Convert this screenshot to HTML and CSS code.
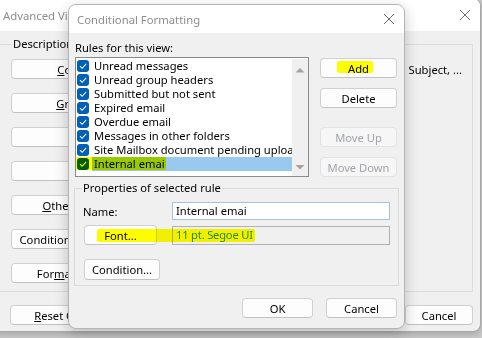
FILE: index.html
```html
<!DOCTYPE html>
<html>
<head>
<meta charset="utf-8">
<link rel="stylesheet" href="styles.css">
</head>
<body>
<div class="bgwin">
  <div class="bg-title">
    <span class="win-title">Advanced View Settings: Compact</span>
    <svg class="close" width="12" height="12" viewBox="0 0 12 12"><path d="M1 1L11 11M11 1L1 11" stroke="#6e6e6e" stroke-width="1" fill="none"/></svg>
  </div>
  <div class="bg-body">
    <fieldset class="desc">
      <legend>Description</legend>
      <div class="desc-grid">
        <button class="btn bbtn"><u>C</u>olumns...</button><span class="dtext first"><span>Importance, Reminder, Icon, Flag Status, Subject, ...</span></span>
        <button class="btn bbtn"><u>G</u>roup By...</button><span class="dtext">None</span>
        <button class="btn bbtn"><u>S</u>ort...</button><span class="dtext">Received (descending)</span>
        <button class="btn bbtn"><u>F</u>ilter...</button><span class="dtext">Off</span>
        <button class="btn bbtn"><u>O</u>ther Settings...</button><span class="dtext">Fonts and other settings</span>
        <button class="btn bbtn">Conditional Formatting...</button><span class="dtext">User defined fonts</span>
        <button class="btn bbtn">For<u>m</u>at Columns...</button><span class="dtext">Specify formats</span>
      </div>
    </fieldset>
    <div class="bg-foot">
      <button class="btn bbtn"><u>R</u>eset Current View</button>
      <div class="bg-foot-right">
        <button class="btn bfoot">OK</button>
        <button class="btn bfoot">Cancel</button>
      </div>
    </div>
  </div>
</div>

<div class="dlg">
  <div class="dlg-title">
    <span class="win-title">Conditional Formatting</span>
    <svg class="close" width="12" height="12" viewBox="0 0 12 12"><path d="M1 1L11 11M11 1L1 11" stroke="#6e6e6e" stroke-width="1" fill="none"/></svg>
  </div>
  <div class="dlg-body">
    <div class="rules">
      <div class="rules-left">
        <div class="lbl">Rules for this view:</div>
        <div class="listbox">
          <ul class="items">
            <li class="item"><span class="cb"><svg width="12" height="12" viewBox="0 0 12 12"><path d="M3 6.2L5.1 8.3L9.2 3.9" stroke="#fff" stroke-width="1.1" fill="none"/></svg></span><span class="itxt">Unread messages</span></li>
            <li class="item"><span class="cb"><svg width="12" height="12" viewBox="0 0 12 12"><path d="M3 6.2L5.1 8.3L9.2 3.9" stroke="#fff" stroke-width="1.1" fill="none"/></svg></span><span class="itxt">Unread group headers</span></li>
            <li class="item"><span class="cb"><svg width="12" height="12" viewBox="0 0 12 12"><path d="M3 6.2L5.1 8.3L9.2 3.9" stroke="#fff" stroke-width="1.1" fill="none"/></svg></span><span class="itxt">Submitted but not sent</span></li>
            <li class="item"><span class="cb"><svg width="12" height="12" viewBox="0 0 12 12"><path d="M3 6.2L5.1 8.3L9.2 3.9" stroke="#fff" stroke-width="1.1" fill="none"/></svg></span><span class="itxt">Expired email</span></li>
            <li class="item"><span class="cb"><svg width="12" height="12" viewBox="0 0 12 12"><path d="M3 6.2L5.1 8.3L9.2 3.9" stroke="#fff" stroke-width="1.1" fill="none"/></svg></span><span class="itxt">Overdue email</span></li>
            <li class="item"><span class="cb"><svg width="12" height="12" viewBox="0 0 12 12"><path d="M3 6.2L5.1 8.3L9.2 3.9" stroke="#fff" stroke-width="1.1" fill="none"/></svg></span><span class="itxt">Messages in other folders</span></li>
            <li class="item"><span class="cb"><svg width="12" height="12" viewBox="0 0 12 12"><path d="M3 6.2L5.1 8.3L9.2 3.9" stroke="#fff" stroke-width="1.1" fill="none"/></svg></span><span class="itxt">Site Mailbox document pending upload</span></li>
            <li class="item sel"><span class="cb"><svg width="12" height="12" viewBox="0 0 12 12"><path d="M3 6.2L5.1 8.3L9.2 3.9" stroke="#fff" stroke-width="1.1" fill="none"/></svg></span><span class="itxt">Internal emai</span></li>
          </ul>
          <div class="scrollbar">
            <svg width="16" height="10" viewBox="0 0 16 10"><path d="M3.5 7.5L8 3L12.5 7.5Z" fill="#a3a3a3"/></svg>
            <svg width="16" height="10" viewBox="0 0 16 10"><path d="M3.5 3L8 7.5L12.5 3Z" fill="#a3a3a3"/></svg>
          </div>
        </div>
      </div>
      <div class="rules-btns">
        <button class="btn rbtn">Add</button>
        <button class="btn rbtn">Delete</button>
        <button class="btn rbtn dis mt-up">Move Up</button>
        <button class="btn rbtn dis">Move Down</button>
      </div>
    </div>
    <fieldset class="props">
      <legend>Properties of selected rule</legend>
      <div class="prop-grid">
        <span class="plabel">Name:</span>
        <div class="field">Internal emai</div>
        <button class="btn fbtn">Font...</button>
        <div class="field ro">11 pt. Segoe UI</div>
      </div>
      <button class="btn cbtn">Condition...</button>
    </fieldset>
    <div class="dlg-foot">
      <button class="btn fbtn2">OK</button>
      <button class="btn fbtn2">Cancel</button>
    </div>
  </div>
  <span class="hl hl-add"></span>
  <span class="hl hl-item"></span>
  <span class="hl hl-font"></span>
</div>
</body>
</html>
```
FILE: styles.css
```css
* { box-sizing: border-box; }
html, body { margin: 0; padding: 0; }
body {
  width: 482px;
  height: 338px;
  overflow: hidden;
  position: relative;
  background: #c9c9c9;
  font-family: "Noto Sans", "Open Sans", sans-serif;
  font-size: 11.2px;
  color: #000;
}
button { font-family: inherit; font-size: 11.2px; color: #000; padding: 0; }
.btn {
  background: #fdfdfd;
  border: 1px solid #d0d0d0;
  border-bottom-color: #c2c2c2;
  border-radius: 4px;
  height: 20px;
  line-height: 17px;
  white-space: nowrap;
}
.btn.dis {
  background: #f6f6f6;
  border-color: #e2e2e2;
  color: #a0a4aa;
}
.win-title { color: #8e8e8e; font-size: 11.3px; white-space: nowrap; }
.close { display: block; flex: none; }

/* background window */
.bgwin {
  position: absolute;
  left: -8px;
  top: -2px;
  width: 489px;
  height: 334px;
  background: #f0f0f0;
  border: 1px solid #a9a9a9;
  border-radius: 8px;
  box-shadow: 0 2px 6px rgba(0,0,0,0.18);
  overflow: hidden;
  display: flex;
  flex-direction: column;
}
.bg-title {
  height: 32px;
  background: #ffffff;
  display: flex;
  align-items: center;
  justify-content: space-between;
  padding: 0 9px 0 10px;
  flex: none;
}
.bg-body { padding: 5px 7px 0 5px; flex: 1; display: flex; flex-direction: column; }
fieldset { margin: 0; min-width: 0; }
.desc {
  border: 1px solid #dcdcdc;
  padding: 7px 0 0 12px;
  height: 256px;
}
.desc legend { padding: 0 1px; margin-left: 1px; line-height: 16px; }
.desc-grid {
  display: grid;
  grid-template-columns: 148px 291px;
  grid-auto-rows: 20px;
  row-gap: 14px;
  column-gap: 12px;
  align-items: center;
}
.bbtn { width: 148px; }
.dtext { white-space: nowrap; overflow: hidden; }
.dtext.first { display: flex; justify-content: flex-end; }
.dtext.first span { flex: none; }
.bg-foot {
  display: flex;
  justify-content: space-between;
  align-items: center;
  margin-top: 13px;
  padding-left: 12px;
}
.bg-foot-right { display: flex; gap: 12px; }
.bfoot { width: 68px; }

/* dialog */
.dlg {
  position: absolute;
  left: 68px;
  top: 4px;
  width: 337px;
  height: 325px;
  background: #f0f0f0;
  border: 1px solid #b4b4b4;
  border-radius: 8px;
  box-shadow: 0 4px 14px rgba(0,0,0,0.22);
  overflow: hidden;
}
.dlg-title {
  height: 28px;
  background: #ffffff;
  display: flex;
  align-items: center;
  justify-content: space-between;
  padding: 0 9px 0 8px;
}
.dlg-body { padding: 7px 7px 0 6px; }
.rules { display: flex; gap: 11px; }
.rules-left { width: 234px; }
.lbl { line-height: 16px; height: 17px; white-space: nowrap; }
.listbox {
  height: 120px;
  background: #fff;
  border: 1px solid #8a8a8a;
  display: flex;
}
.items {
  list-style: none;
  margin: 0;
  padding: 1px 0 0 1px;
  flex: 1;
  min-width: 0;
}
.item { height: 14px; display: flex; align-items: center; white-space: nowrap; }
.cb {
  width: 12px; height: 12px;
  background: #005fb8;
  border-radius: 3px;
  flex: none;
  display: block;
}
.cb svg { display: block; }
.itxt {
  margin-left: 3px;
  padding-left: 2px;
  flex: 1;
  min-width: 0;
  overflow: hidden;
  height: 14px;
  line-height: 14px;
}
.sel .itxt { background: #99c9ef; }
.scrollbar {
  width: 16px;
  background: #f0f0f0;
  margin: 1px 0 0 0;
  display: flex;
  flex-direction: column;
  justify-content: space-between;
  padding: 6px 0 4px;
}
.scrollbar svg { display: block; }
.rules-btns {
  display: flex;
  flex-direction: column;
  gap: 10px;
  padding-top: 18px;
  width: 77px;
}
.rbtn { width: 77px; height: 20px; }
.rules-btns .mt-up { margin-top: 9px; }

.props {
  border: 1px solid #dadada;
  width: 325px;
  margin: 3px 0 0 -1px;
  padding: 0 0 5px 9px;
}
.props legend { padding: 0 1px; margin-left: -2px; line-height: 16px; }
.prop-grid {
  display: grid;
  grid-template-columns: 88px 218px;
  grid-template-rows: 18px 20px;
  row-gap: 5px;
  align-items: center;
  margin-top: 6px;
}
.plabel { margin-left: -1px; }
.field {
  height: 18px;
  background: #fff;
  border: 1px solid #a9c0da;
  padding: 0 3px;
  line-height: 15px;
  white-space: nowrap;
}
.field.ro {
  height: 19px;
  background: #f0f0f0;
  border-color: #b1b1b1;
  color: #2d8a00;
  letter-spacing: -0.2px;
}
.fbtn { width: 73px; }
.cbtn { width: 76px; height: 21px; margin-top: 14px; display: block; }
.dlg-foot {
  display: flex;
  justify-content: flex-end;
  gap: 13px;
  margin-top: 12px;
}
.fbtn2 { width: 71px; }

/* highlighter strokes */
.hl {
  position: absolute;
  background: #ffff00;
  mix-blend-mode: multiply;
  border-radius: 2px;
}
.hl-add { left: 268px; top: 56px; width: 36px; height: 12px; }
.hl-item { left: 7px; top: 152px; width: 90px; height: 13px; }
.hl-font { left: 28px; top: 224px; width: 158px; height: 13px; }
```
